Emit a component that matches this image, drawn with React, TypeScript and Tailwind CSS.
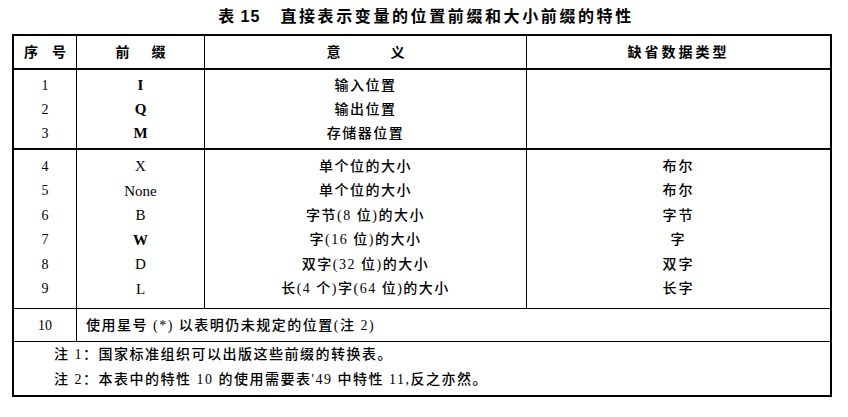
import React from "react";

const serif = "font-['Liberation_Serif','Noto_Sans_CJK_SC',serif]";
const sansB = "font-['Liberation_Sans','Noto_Sans_CJK_SC',sans-serif]";

type Row = { n: string; p: string; m: string; t: string; b?: boolean };

const group1: Row[] = [
  { n: "1", p: "I", m: "输入位置", t: "", b: true },
  { n: "2", p: "Q", m: "输出位置", t: "", b: true },
  { n: "3", p: "M", m: "存储器位置", t: "", b: true },
];
const group2: Row[] = [
  { n: "4", p: "X", m: "单个位的大小", t: "布尔" },
  { n: "5", p: "None", m: "单个位的大小", t: "布尔" },
  { n: "6", p: "B", m: "字节(8 位)的大小", t: "字节" },
  { n: "7", p: "W", m: "字(16 位)的大小", t: "字", b: true },
  { n: "8", p: "D", m: "双字(32 位)的大小", t: "双字" },
  { n: "9", p: "L", m: "长(4 个)字(64 位)的大小", t: "长字" },
];

function Group({ rows, rowH, pt, pb, border }: { rows: Row[]; rowH: string; pt: string; pb: string; border: string }) {
  return (
    <div className={`flex ${border}`}>
      <div className={`w-[63px] border-r border-black ${pt} ${pb} flex flex-col`}>
        {rows.map((r, i) => (
          <div key={i} className={`${rowH} flex items-center justify-center ${serif} text-[14px]`}>
            {r.n}
          </div>
        ))}
      </div>
      <div className={`w-[128px] border-r border-black ${pt} ${pb} flex flex-col`}>
        {rows.map((r, i) => (
          <div
            key={i}
            className={`${rowH} flex items-center justify-center ${serif} text-[15px] ${r.b ? "font-bold" : "font-normal"}`}
          >
            {r.p}
          </div>
        ))}
      </div>
      <div className={`w-[322px] border-r border-black ${pt} ${pb} flex flex-col`}>
        {rows.map((r, i) => (
          <div key={i} className={`${rowH} flex items-center justify-center ${serif} text-[14px] font-medium tracking-[1.5px]`}>
            {r.m}
          </div>
        ))}
      </div>
      <div className={`flex-1 ${pt} ${pb} flex flex-col`}>
        {rows.map((r, i) => (
          <div key={i} className={`${rowH} flex items-center justify-center ${serif} text-[14px] font-medium tracking-[2px]`}>
            {r.t}
          </div>
        ))}
      </div>
    </div>
  );
}

export default function App() {
  return (
    <div className="w-[848px] h-[417px] bg-white text-black overflow-hidden">
      <div className={`h-[34px] flex items-center justify-center pl-[4px] ${sansB} font-bold text-[16px]`}>
        <span className="tracking-[1px]">表&nbsp;15</span>
        <span className="ml-[20px] tracking-[2.6px]">直接表示变量的位置前缀和大小前缀的特性</span>
      </div>
      <div className="ml-[12px] w-[820px] border-2 border-black">
        <div className={`flex h-[34px] border-b-2 border-black ${sansB} font-semibold text-[14px]`}>
          <div className="w-[63px] border-r border-black flex items-center justify-center gap-[14px]">
            <span>序</span>
            <span>号</span>
          </div>
          <div className="w-[128px] border-r border-black flex items-center justify-center gap-[22px]">
            <span>前</span>
            <span>缀</span>
          </div>
          <div className="w-[322px] border-r border-black flex items-center justify-center gap-[50px]">
            <span>意</span>
            <span>义</span>
          </div>
          <div className="flex-1 flex items-center justify-center tracking-[3px]">缺省数据类型</div>
        </div>
        <Group rows={group1} rowH="h-[24px]" pt="pt-[3px]" pb="pb-[3px]" border="border-b-2 border-black" />
        <Group rows={group2} rowH="h-[24.5px]" pt="pt-[4px]" pb="pb-[7px]" border="border-b border-black" />
        <div className="flex h-[33px] border-b border-black">
          <div className={`w-[63px] border-r border-black flex items-center justify-center ${serif} text-[14px]`}>10</div>
          <div className={`flex-1 flex items-center pl-[9px] ${serif} text-[14px] font-medium tracking-[1.5px]`}>
            使用星号 (*) 以表明仍未规定的位置(注 2)
          </div>
        </div>
        <div className={`h-[53px] pl-[40px] ${serif} text-[14px] font-medium tracking-[1.5px] leading-[25px]`}>
          <div>注 1：国家标准组织可以出版这些前缀的转换表。</div>
          <div>注 2：本表中的特性 10 的使用需要表'49 中特性 11,反之亦然。</div>
        </div>
      </div>
    </div>
  );
}
